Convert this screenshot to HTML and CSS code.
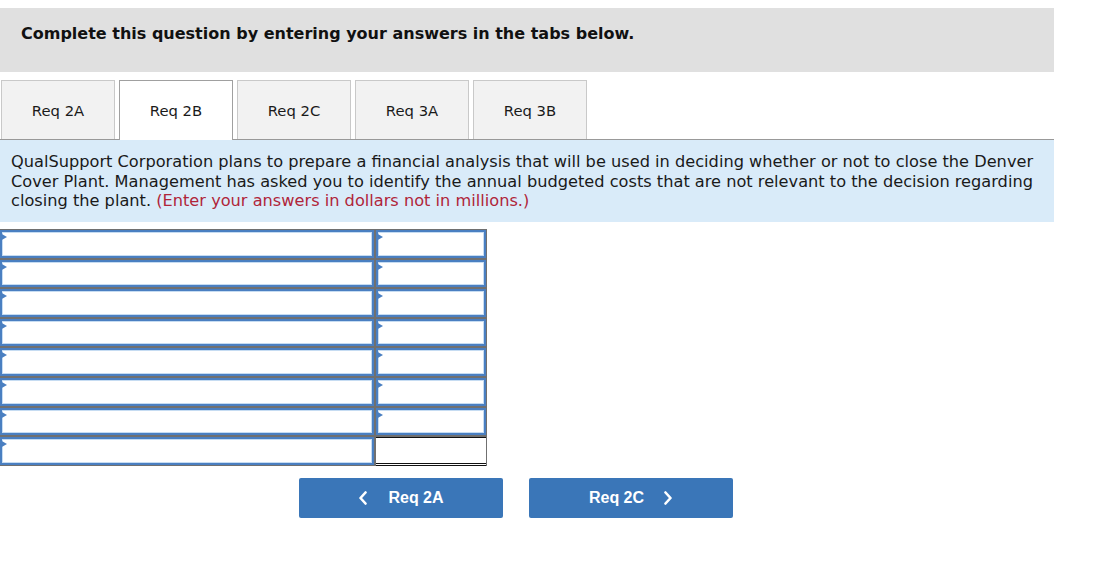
FILE: index.html
```html
<!DOCTYPE html>
<html>
<head>
<meta charset="utf-8">
<link rel="stylesheet" href="styles.css">
</head>
<body>
<div class="page">
  <div class="header">Complete this question by entering your answers in the tabs below.</div>
  <div class="tabs">
    <div class="tab">Req 2A</div>
    <div class="tab active">Req 2B</div>
    <div class="tab">Req 2C</div>
    <div class="tab">Req 3A</div>
    <div class="tab">Req 3B</div>
  </div>
  <div class="prompt">QualSupport Corporation plans to prepare a financial analysis that will be used in deciding whether or not to close the Denver Cover Plant. Management has asked you to identify the annual budgeted costs that are not relevant to the decision regarding closing the plant. <span class="note">(Enter your answers in dollars not in millions.)</span></div>
  <div class="grid">
    <div class="cell"><div class="inp"></div></div><div class="cell"><div class="inp"></div></div>
    <div class="cell"><div class="inp"></div></div><div class="cell"><div class="inp"></div></div>
    <div class="cell"><div class="inp"></div></div><div class="cell"><div class="inp"></div></div>
    <div class="cell"><div class="inp"></div></div><div class="cell"><div class="inp"></div></div>
    <div class="cell"><div class="inp"></div></div><div class="cell"><div class="inp"></div></div>
    <div class="cell"><div class="inp"></div></div><div class="cell"><div class="inp"></div></div>
    <div class="cell"><div class="inp"></div></div><div class="cell"><div class="inp"></div></div>
    <div class="cell"><div class="inp"></div></div><div class="cell total"></div>
  </div>
  <div class="nav">
    <div class="btn"><svg class="chev left" width="10" height="14" viewBox="0 0 10 14"><path d="M7.5 1.5 L2.5 7 L7.5 12.5" fill="none" stroke="#fff" stroke-width="2.6" stroke-linecap="round" stroke-linejoin="round"/></svg>Req 2A</div>
    <div class="btn">Req 2C<svg class="chev right" width="10" height="14" viewBox="0 0 10 14"><path d="M2.5 1.5 L7.5 7 L2.5 12.5" fill="none" stroke="#fff" stroke-width="2.6" stroke-linecap="round" stroke-linejoin="round"/></svg></div>
  </div>
</div>
</body>
</html>
```
FILE: styles.css
```css
html, body { margin: 0; padding: 0; background: #fff; }
body { font-family: "DejaVu Sans", Verdana, sans-serif; color: #1a1a1a; }
.page { width: 1054px; padding-top: 8px; }
.header {
  background: #e0e0e0;
  height: 64px;
  box-sizing: border-box;
  padding: 16px 0 0 21px;
  font-weight: bold;
  font-size: 16px;
  color: #111;
}
.tabs {
  display: flex;
  gap: 4px;
  margin-top: 8px;
  height: 59px;
  border-bottom: 1px solid #999;
  padding-left: 1px;
}
.tab {
  width: 114px;
  box-sizing: border-box;
  height: 59px;
  background: #f2f2f2;
  border: 1px solid #c9c9c9;
  border-bottom: none;
  display: flex;
  align-items: center;
  justify-content: center;
  font-size: 14.8px;
  color: #1a1a1a;
}
.tab.active {
  background: #fff;
  border-color: #a0a0a0;
  height: 60px;
  margin-bottom: -1px;
  position: relative;
}
.prompt {
  background: #d9ebf9;
  height: 82px;
  box-sizing: border-box;
  padding: 12px 11px 0 11px;
  font-size: 16.2px;
  line-height: 19.5px;
  color: #1a1a1a;
}
.note { color: #b0253a; }
.grid {
  margin-top: 7px;
  width: 487px;
  box-sizing: border-box;
  display: grid;
  grid-template-columns: 374px 110px;
  grid-auto-rows: 27.6px;
  gap: 2px;
  padding: 1px 1px 1px 0;
  background: #707070;
}
.cell { background: #fff; }
.inp {
  position: relative;
  height: 100%;
  box-sizing: border-box;
  border: 2px solid #4a7fc1;
  box-shadow: inset 0 0 0 1px #c6dcf2;
}
.inp::before {
  content: "";
  position: absolute;
  left: -2px;
  top: 1px;
  border-left: 7px solid #4a7fc1;
  border-top: 4px solid transparent;
  border-bottom: 4px solid transparent;
}
.cell.total {
  border-top: 1px solid #111;
  border-bottom: 3px double #111;
  margin-bottom: -1px;
}
.nav {
  display: flex;
  gap: 26px;
  margin: 12px 0 0 299px;
}
.btn {
  width: 204px;
  height: 40px;
  background: #3a76b8;
  border-radius: 2px;
  color: #fff;
  font-family: "Liberation Sans", Arial, sans-serif;
  font-weight: bold;
  font-size: 16px;
  display: flex;
  align-items: center;
  justify-content: center;
}
.chev { display: block; }
.chev.left { margin-right: 20px; }
.chev.right { margin-left: 19px; }
```
